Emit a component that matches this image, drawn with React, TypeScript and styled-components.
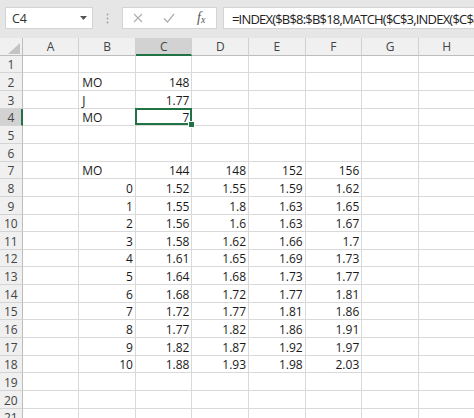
import { Fragment } from "react";
import styled, { createGlobalStyle } from "styled-components";

const GlobalStyle = createGlobalStyle`
	html, body {
		margin: 0;
		padding: 0;
		background: #fff;
	}
	body {
		font-family: "Open Sans", "Liberation Sans", sans-serif;
	}
`;

const COLS = ["A", "B", "C", "D", "E", "F", "G", "H"];
const ROW_COUNT = 21;

type Value = string | number;

// sheet content keyed by row, then column letter
const data: Record<number, Record<string, Value>> = {
	2: { B: "MO", C: 148 },
	3: { B: "J", C: 1.77 },
	4: { B: "MO", C: 7 },
	7: { B: "MO", C: 144, D: 148, E: 152, F: 156 }
};

const table = [
	[1.52, 1.55, 1.59, 1.62],
	[1.55, 1.8, 1.63, 1.65],
	[1.56, 1.6, 1.63, 1.67],
	[1.58, 1.62, 1.66, 1.7],
	[1.61, 1.65, 1.69, 1.73],
	[1.64, 1.68, 1.73, 1.77],
	[1.68, 1.72, 1.77, 1.81],
	[1.72, 1.77, 1.81, 1.86],
	[1.77, 1.82, 1.86, 1.91],
	[1.82, 1.87, 1.92, 1.97],
	[1.88, 1.93, 1.98, 2.03]
];
table.forEach((vals, i) => {
	data[8 + i] = { B: i, C: vals[0], D: vals[1], E: vals[2], F: vals[3] };
});

const ACTIVE = { col: "C", row: 4 };
const GREEN = "#217346";

const Frame = styled.div`
	width: 474px;
	height: 418px;
	overflow: hidden;
	background: #fff;
	display: flex;
	flex-direction: column;
`;

const FormulaBar = styled.div`
	flex: none;
	height: 38.3px;
	box-sizing: border-box;
	padding: 7px 0 0 5px;
	background: #e6e6e6;
	display: flex;
	align-items: flex-start;
`;

const Box = styled.div`
	height: 22px;
	box-sizing: border-box;
	background: #fff;
	border: 1px solid #d4d4d4;
	display: flex;
	align-items: center;
`;

const NameBox = styled(Box)`
	width: 88.3px;
	justify-content: space-between;
	padding: 0 5px 0 6px;
	font-size: 12.5px;
	color: #333;
`;

const Grip = styled.div`
	width: 28.4px;
	height: 22px;
	display: flex;
	align-items: center;
	justify-content: center;
`;

const FxGroup = styled(Box)`
	width: 95.6px;
	display: grid;
	grid-template-columns: 31px 31px 33px;
	justify-items: center;
`;

const Fx = styled.span`
	font-family: "Liberation Serif", "DejaVu Serif", serif;
	font-style: italic;
	font-size: 14px;
	color: #555;
	line-height: 1;
	sub {
		font-size: 10px;
		vertical-align: -1px;
	}
`;

const FormulaInput = styled(Box)`
	flex: 1;
	min-width: 0;
	margin-left: 5.7px;
	border-right: none;
	padding-left: 8px;
	padding-top: 1px;
	font-size: 13px;
	letter-spacing: -0.8px;
	color: #222;
	white-space: nowrap;
	overflow: hidden;
`;

const Sheet = styled.div`
	flex: none;
	display: grid;
	grid-template-columns: 22.7px repeat(8, 56.6px);
	grid-template-rows: 17.3px repeat(${ROW_COUNT}, 17.67px);
	font-size: 12px;
`;

const Corner = styled.div`
	background: #f0f0f0;
	border-right: 1px solid #bdbdbd;
	border-bottom: 1px solid #bdbdbd;
	box-sizing: border-box;
	display: flex;
	align-items: flex-end;
	justify-content: flex-end;
	padding: 0 2px 1px 0;
`;

const ColHeader = styled.div<{ $selected?: boolean }>`
	box-sizing: border-box;
	background: ${(p) => (p.$selected ? "#d2d2d2" : "#f0f0f0")};
	border-right: 1px solid #d0d0d0;
	border-bottom: ${(p) => (p.$selected ? `2px solid ${GREEN}` : "1px solid #bdbdbd")};
	color: #444;
	display: flex;
	align-items: center;
	justify-content: center;
	padding-top: ${(p) => (p.$selected ? "1px" : "0")};
`;

const RowHeader = styled.div<{ $selected?: boolean }>`
	box-sizing: border-box;
	background: ${(p) => (p.$selected ? "#d2d2d2" : "#f0f0f0")};
	border-right: ${(p) => (p.$selected ? `2px solid ${GREEN}` : "1px solid #bdbdbd")};
	border-bottom: 1px solid #d4d4d4;
	color: #444;
	line-height: 14px;
	display: flex;
	align-items: flex-end;
	justify-content: center;
	padding-left: ${(p) => (p.$selected ? "1px" : "0")};
`;

const Cell = styled.div<{ $align: "left" | "right"; $active?: boolean }>`
	position: relative;
	box-sizing: border-box;
	border-right: 1px solid #d9d9d9;
	border-bottom: 1px solid #d9d9d9;
	color: #1a1a1a;
	line-height: 14px;
	display: flex;
	align-items: flex-end;
	justify-content: ${(p) => (p.$align === "left" ? "flex-start" : "flex-end")};
	padding: 0 2px 0 3px;
	white-space: nowrap;
	z-index: ${(p) => (p.$active ? 2 : "auto")};

	${(p) =>
		p.$active &&
		`
		&::after {
			content: "";
			position: absolute;
			left: -1px;
			top: -1px;
			right: -1px;
			bottom: 0;
			border: 2px solid ${GREEN};
			box-sizing: border-box;
		}
		&::before {
			content: "";
			position: absolute;
			right: -4px;
			bottom: -3px;
			width: 5px;
			height: 5px;
			background: ${GREEN};
			border: 1px solid #fff;
			z-index: 1;
		}
	`}
`;

const App = () => {
	const rows = Array.from({ length: ROW_COUNT }, (_, i) => i + 1);
	return (
		<Frame>
			<GlobalStyle />
			<FormulaBar>
				<NameBox>
					<span>C4</span>
					<svg width="7" height="4" viewBox="0 0 7 4">
						<path d="M0 0 L7 0 L3.5 4 Z" fill="#555" />
					</svg>
				</NameBox>
				<Grip>
					<svg width="3" height="11" viewBox="0 0 3 11">
						<circle cx="1.5" cy="1.5" r="0.9" fill="#a0a0a0" />
						<circle cx="1.5" cy="5.5" r="0.9" fill="#a0a0a0" />
						<circle cx="1.5" cy="9.5" r="0.9" fill="#a0a0a0" />
					</svg>
				</Grip>
				<FxGroup>
					<svg width="10" height="10" viewBox="0 0 10 10">
						<path d="M1 1 L9 9 M9 1 L1 9" stroke="#b0b0b0" strokeWidth="1.2" fill="none" />
					</svg>
					<svg width="12" height="10" viewBox="0 0 12 10">
						<path d="M1 5.5 L4.5 9 L11 1" stroke="#b0b0b0" strokeWidth="1.3" fill="none" />
					</svg>
					<Fx>
						f<sub>x</sub>
					</Fx>
				</FxGroup>
				<FormulaInput>=INDEX($B$8:$B$18,MATCH($C$3,INDEX($C$8:$F$18,MATCH($C$2,$C$7:$F$7,0),0),1))</FormulaInput>
			</FormulaBar>
			<Sheet>
				<Corner>
					<svg width="12" height="11" viewBox="0 0 12 11">
						<path d="M12 0 L12 11 L0 11 Z" fill="#c4c4c4" />
					</svg>
				</Corner>
				{COLS.map((c) => (
					<ColHeader key={c} $selected={c === ACTIVE.col}>
						{c}
					</ColHeader>
				))}
				{rows.map((r) => (
					<Fragment key={r}>
						<RowHeader $selected={r === ACTIVE.row}>{r}</RowHeader>
						{COLS.map((c) => {
							const v = data[r]?.[c];
							return (
								<Cell
									key={c}
									$align={typeof v === "string" ? "left" : "right"}
									$active={r === ACTIVE.row && c === ACTIVE.col}
								>
									{v ?? ""}
								</Cell>
							);
						})}
					</Fragment>
				))}
			</Sheet>
		</Frame>
	);
};

export default App;
